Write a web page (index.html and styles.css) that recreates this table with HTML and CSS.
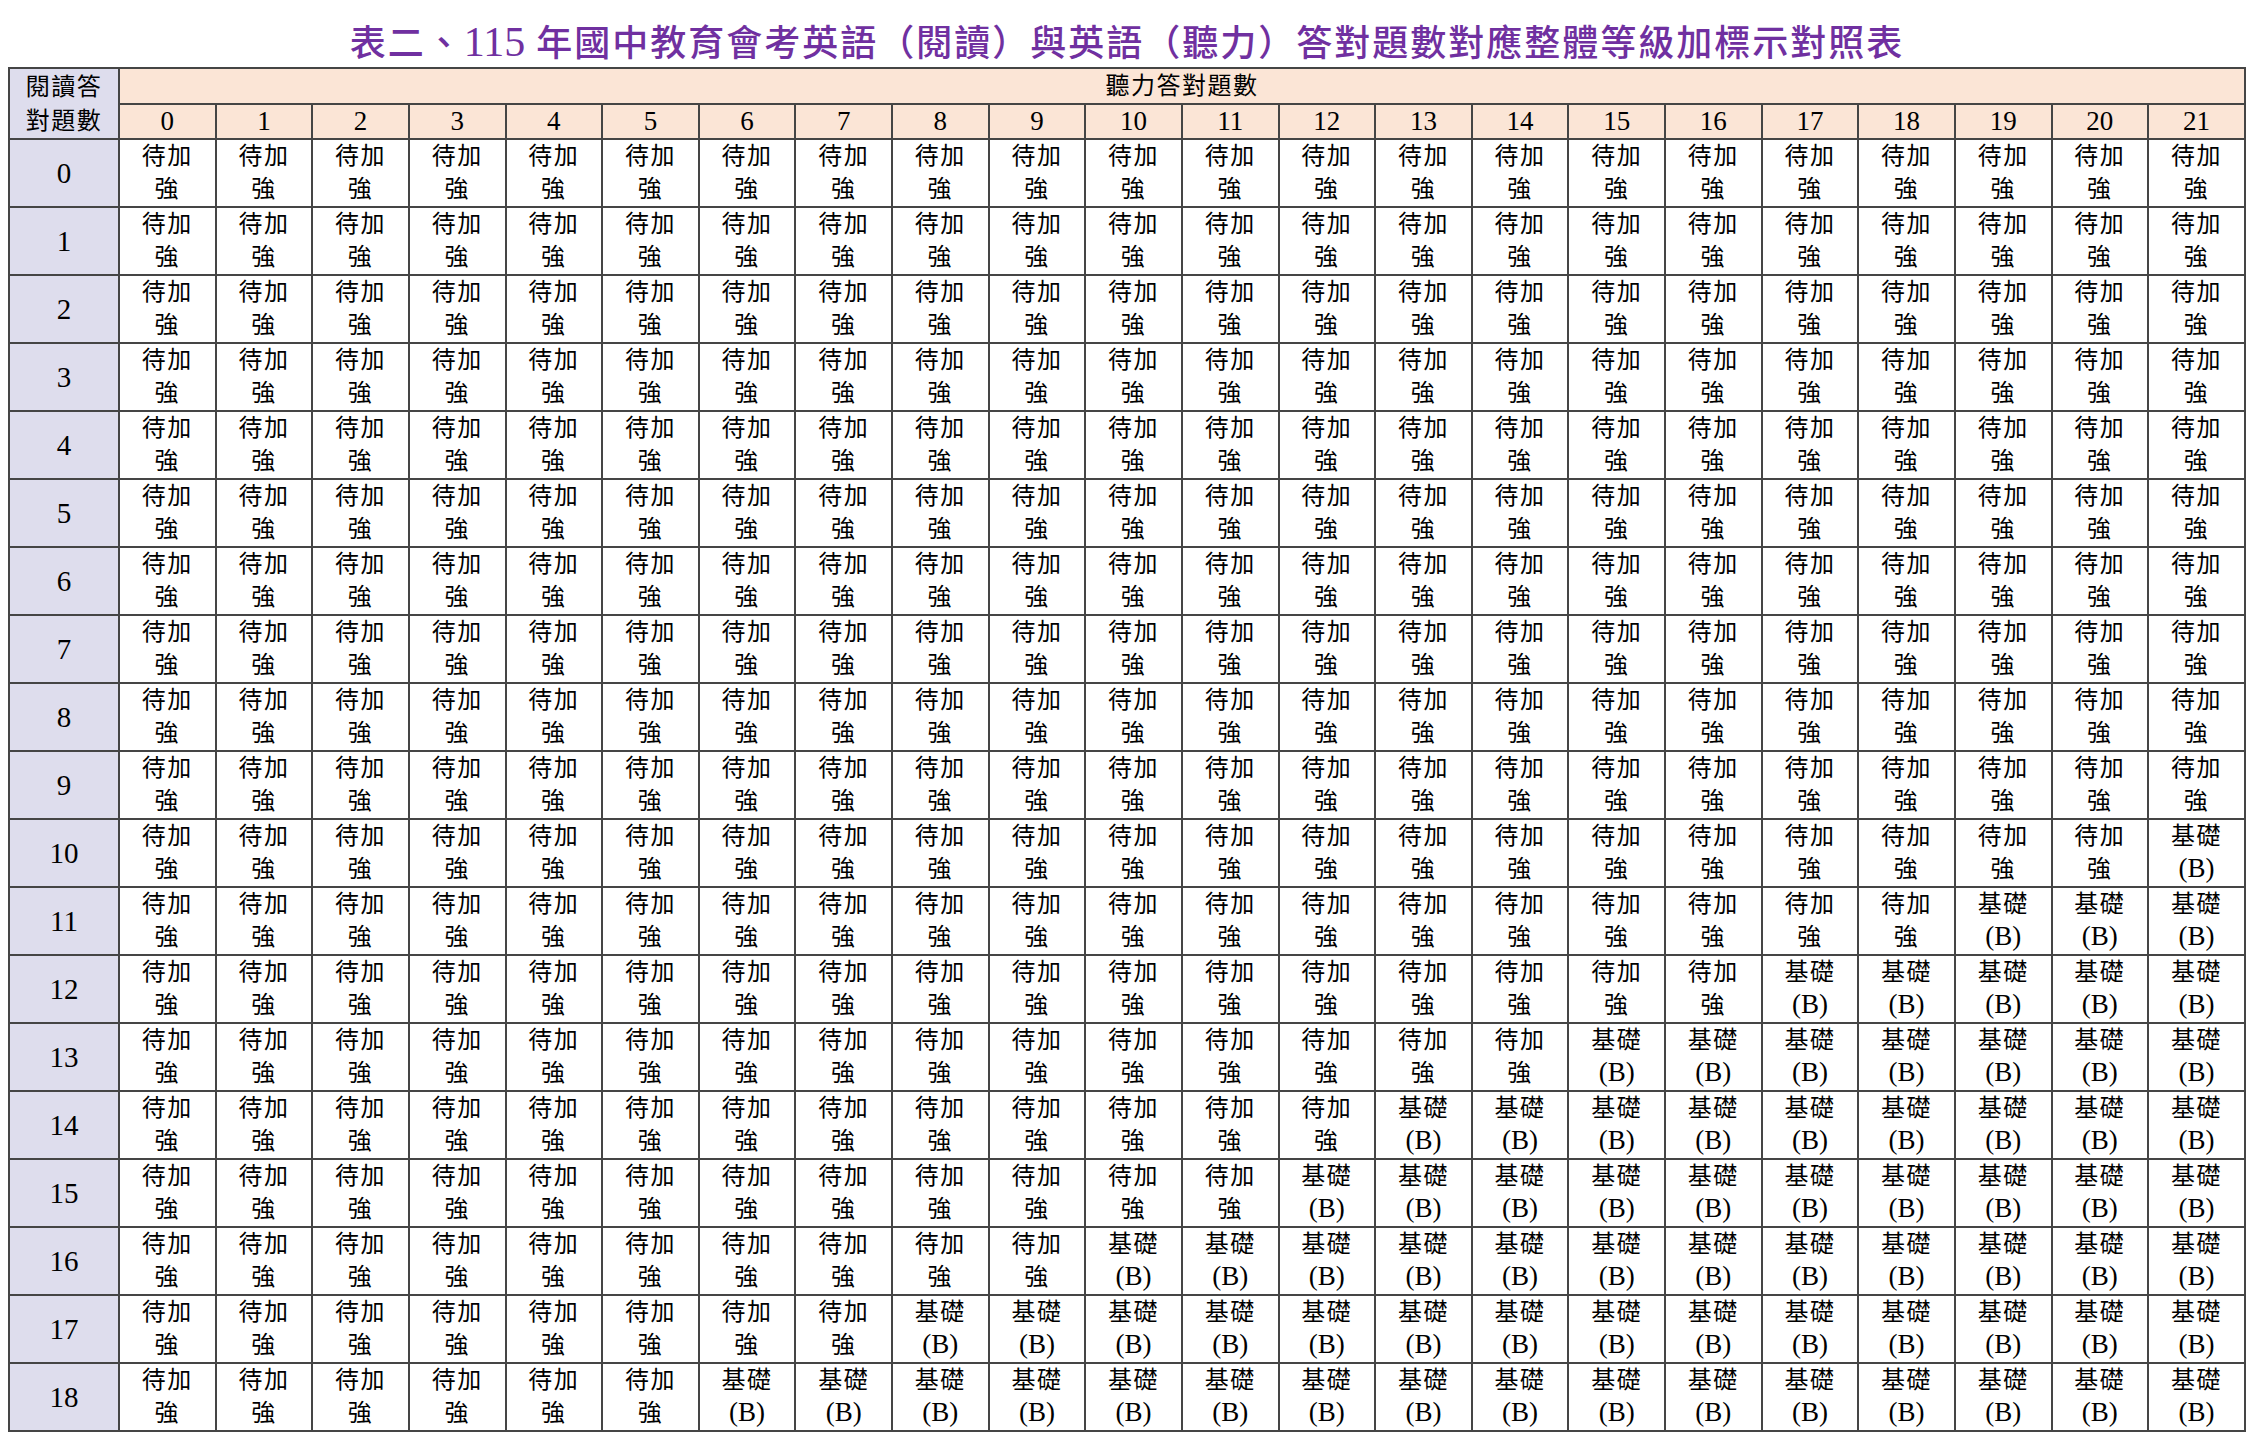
FILE: index.html
```html
<!DOCTYPE html>
<html lang="zh-Hant">
<head>
<meta charset="utf-8">
<title>表二、115 年國中教育會考英語（閱讀）與英語（聽力）答對題數對應整體等級加標示對照表</title>
<link rel="stylesheet" href="styles.css">
</head>
<body>
<h1 class="title">表二、<span class="num">115</span> 年國中教育會考英語（閱讀）與英語（聽力）答對題數對應整體等級加標示對照表</h1>
<table class="grid">
<colgroup><col class="c-lab"><col span="22"></colgroup>
<thead>
<tr class="h1"><th class="corner" rowspan="2">閱讀答<br>對題數</th><th class="listen" colspan="22">聽力答對題數</th></tr>
<tr class="h2"><th>0</th><th>1</th><th>2</th><th>3</th><th>4</th><th>5</th><th>6</th><th>7</th><th>8</th><th>9</th><th>10</th><th>11</th><th>12</th><th>13</th><th>14</th><th>15</th><th>16</th><th>17</th><th>18</th><th>19</th><th>20</th><th>21</th></tr>
</thead>
<tbody>
<tr><th class="lab">0</th><td>待加<br>強</td><td>待加<br>強</td><td>待加<br>強</td><td>待加<br>強</td><td>待加<br>強</td><td>待加<br>強</td><td>待加<br>強</td><td>待加<br>強</td><td>待加<br>強</td><td>待加<br>強</td><td>待加<br>強</td><td>待加<br>強</td><td>待加<br>強</td><td>待加<br>強</td><td>待加<br>強</td><td>待加<br>強</td><td>待加<br>強</td><td>待加<br>強</td><td>待加<br>強</td><td>待加<br>強</td><td>待加<br>強</td><td>待加<br>強</td></tr>
<tr><th class="lab">1</th><td>待加<br>強</td><td>待加<br>強</td><td>待加<br>強</td><td>待加<br>強</td><td>待加<br>強</td><td>待加<br>強</td><td>待加<br>強</td><td>待加<br>強</td><td>待加<br>強</td><td>待加<br>強</td><td>待加<br>強</td><td>待加<br>強</td><td>待加<br>強</td><td>待加<br>強</td><td>待加<br>強</td><td>待加<br>強</td><td>待加<br>強</td><td>待加<br>強</td><td>待加<br>強</td><td>待加<br>強</td><td>待加<br>強</td><td>待加<br>強</td></tr>
<tr><th class="lab">2</th><td>待加<br>強</td><td>待加<br>強</td><td>待加<br>強</td><td>待加<br>強</td><td>待加<br>強</td><td>待加<br>強</td><td>待加<br>強</td><td>待加<br>強</td><td>待加<br>強</td><td>待加<br>強</td><td>待加<br>強</td><td>待加<br>強</td><td>待加<br>強</td><td>待加<br>強</td><td>待加<br>強</td><td>待加<br>強</td><td>待加<br>強</td><td>待加<br>強</td><td>待加<br>強</td><td>待加<br>強</td><td>待加<br>強</td><td>待加<br>強</td></tr>
<tr><th class="lab">3</th><td>待加<br>強</td><td>待加<br>強</td><td>待加<br>強</td><td>待加<br>強</td><td>待加<br>強</td><td>待加<br>強</td><td>待加<br>強</td><td>待加<br>強</td><td>待加<br>強</td><td>待加<br>強</td><td>待加<br>強</td><td>待加<br>強</td><td>待加<br>強</td><td>待加<br>強</td><td>待加<br>強</td><td>待加<br>強</td><td>待加<br>強</td><td>待加<br>強</td><td>待加<br>強</td><td>待加<br>強</td><td>待加<br>強</td><td>待加<br>強</td></tr>
<tr><th class="lab">4</th><td>待加<br>強</td><td>待加<br>強</td><td>待加<br>強</td><td>待加<br>強</td><td>待加<br>強</td><td>待加<br>強</td><td>待加<br>強</td><td>待加<br>強</td><td>待加<br>強</td><td>待加<br>強</td><td>待加<br>強</td><td>待加<br>強</td><td>待加<br>強</td><td>待加<br>強</td><td>待加<br>強</td><td>待加<br>強</td><td>待加<br>強</td><td>待加<br>強</td><td>待加<br>強</td><td>待加<br>強</td><td>待加<br>強</td><td>待加<br>強</td></tr>
<tr><th class="lab">5</th><td>待加<br>強</td><td>待加<br>強</td><td>待加<br>強</td><td>待加<br>強</td><td>待加<br>強</td><td>待加<br>強</td><td>待加<br>強</td><td>待加<br>強</td><td>待加<br>強</td><td>待加<br>強</td><td>待加<br>強</td><td>待加<br>強</td><td>待加<br>強</td><td>待加<br>強</td><td>待加<br>強</td><td>待加<br>強</td><td>待加<br>強</td><td>待加<br>強</td><td>待加<br>強</td><td>待加<br>強</td><td>待加<br>強</td><td>待加<br>強</td></tr>
<tr><th class="lab">6</th><td>待加<br>強</td><td>待加<br>強</td><td>待加<br>強</td><td>待加<br>強</td><td>待加<br>強</td><td>待加<br>強</td><td>待加<br>強</td><td>待加<br>強</td><td>待加<br>強</td><td>待加<br>強</td><td>待加<br>強</td><td>待加<br>強</td><td>待加<br>強</td><td>待加<br>強</td><td>待加<br>強</td><td>待加<br>強</td><td>待加<br>強</td><td>待加<br>強</td><td>待加<br>強</td><td>待加<br>強</td><td>待加<br>強</td><td>待加<br>強</td></tr>
<tr><th class="lab">7</th><td>待加<br>強</td><td>待加<br>強</td><td>待加<br>強</td><td>待加<br>強</td><td>待加<br>強</td><td>待加<br>強</td><td>待加<br>強</td><td>待加<br>強</td><td>待加<br>強</td><td>待加<br>強</td><td>待加<br>強</td><td>待加<br>強</td><td>待加<br>強</td><td>待加<br>強</td><td>待加<br>強</td><td>待加<br>強</td><td>待加<br>強</td><td>待加<br>強</td><td>待加<br>強</td><td>待加<br>強</td><td>待加<br>強</td><td>待加<br>強</td></tr>
<tr><th class="lab">8</th><td>待加<br>強</td><td>待加<br>強</td><td>待加<br>強</td><td>待加<br>強</td><td>待加<br>強</td><td>待加<br>強</td><td>待加<br>強</td><td>待加<br>強</td><td>待加<br>強</td><td>待加<br>強</td><td>待加<br>強</td><td>待加<br>強</td><td>待加<br>強</td><td>待加<br>強</td><td>待加<br>強</td><td>待加<br>強</td><td>待加<br>強</td><td>待加<br>強</td><td>待加<br>強</td><td>待加<br>強</td><td>待加<br>強</td><td>待加<br>強</td></tr>
<tr><th class="lab">9</th><td>待加<br>強</td><td>待加<br>強</td><td>待加<br>強</td><td>待加<br>強</td><td>待加<br>強</td><td>待加<br>強</td><td>待加<br>強</td><td>待加<br>強</td><td>待加<br>強</td><td>待加<br>強</td><td>待加<br>強</td><td>待加<br>強</td><td>待加<br>強</td><td>待加<br>強</td><td>待加<br>強</td><td>待加<br>強</td><td>待加<br>強</td><td>待加<br>強</td><td>待加<br>強</td><td>待加<br>強</td><td>待加<br>強</td><td>待加<br>強</td></tr>
<tr><th class="lab">10</th><td>待加<br>強</td><td>待加<br>強</td><td>待加<br>強</td><td>待加<br>強</td><td>待加<br>強</td><td>待加<br>強</td><td>待加<br>強</td><td>待加<br>強</td><td>待加<br>強</td><td>待加<br>強</td><td>待加<br>強</td><td>待加<br>強</td><td>待加<br>強</td><td>待加<br>強</td><td>待加<br>強</td><td>待加<br>強</td><td>待加<br>強</td><td>待加<br>強</td><td>待加<br>強</td><td>待加<br>強</td><td>待加<br>強</td><td>基礎<br><span class="g">(B)</span></td></tr>
<tr><th class="lab">11</th><td>待加<br>強</td><td>待加<br>強</td><td>待加<br>強</td><td>待加<br>強</td><td>待加<br>強</td><td>待加<br>強</td><td>待加<br>強</td><td>待加<br>強</td><td>待加<br>強</td><td>待加<br>強</td><td>待加<br>強</td><td>待加<br>強</td><td>待加<br>強</td><td>待加<br>強</td><td>待加<br>強</td><td>待加<br>強</td><td>待加<br>強</td><td>待加<br>強</td><td>待加<br>強</td><td>基礎<br><span class="g">(B)</span></td><td>基礎<br><span class="g">(B)</span></td><td>基礎<br><span class="g">(B)</span></td></tr>
<tr><th class="lab">12</th><td>待加<br>強</td><td>待加<br>強</td><td>待加<br>強</td><td>待加<br>強</td><td>待加<br>強</td><td>待加<br>強</td><td>待加<br>強</td><td>待加<br>強</td><td>待加<br>強</td><td>待加<br>強</td><td>待加<br>強</td><td>待加<br>強</td><td>待加<br>強</td><td>待加<br>強</td><td>待加<br>強</td><td>待加<br>強</td><td>待加<br>強</td><td>基礎<br><span class="g">(B)</span></td><td>基礎<br><span class="g">(B)</span></td><td>基礎<br><span class="g">(B)</span></td><td>基礎<br><span class="g">(B)</span></td><td>基礎<br><span class="g">(B)</span></td></tr>
<tr><th class="lab">13</th><td>待加<br>強</td><td>待加<br>強</td><td>待加<br>強</td><td>待加<br>強</td><td>待加<br>強</td><td>待加<br>強</td><td>待加<br>強</td><td>待加<br>強</td><td>待加<br>強</td><td>待加<br>強</td><td>待加<br>強</td><td>待加<br>強</td><td>待加<br>強</td><td>待加<br>強</td><td>待加<br>強</td><td>基礎<br><span class="g">(B)</span></td><td>基礎<br><span class="g">(B)</span></td><td>基礎<br><span class="g">(B)</span></td><td>基礎<br><span class="g">(B)</span></td><td>基礎<br><span class="g">(B)</span></td><td>基礎<br><span class="g">(B)</span></td><td>基礎<br><span class="g">(B)</span></td></tr>
<tr><th class="lab">14</th><td>待加<br>強</td><td>待加<br>強</td><td>待加<br>強</td><td>待加<br>強</td><td>待加<br>強</td><td>待加<br>強</td><td>待加<br>強</td><td>待加<br>強</td><td>待加<br>強</td><td>待加<br>強</td><td>待加<br>強</td><td>待加<br>強</td><td>待加<br>強</td><td>基礎<br><span class="g">(B)</span></td><td>基礎<br><span class="g">(B)</span></td><td>基礎<br><span class="g">(B)</span></td><td>基礎<br><span class="g">(B)</span></td><td>基礎<br><span class="g">(B)</span></td><td>基礎<br><span class="g">(B)</span></td><td>基礎<br><span class="g">(B)</span></td><td>基礎<br><span class="g">(B)</span></td><td>基礎<br><span class="g">(B)</span></td></tr>
<tr><th class="lab">15</th><td>待加<br>強</td><td>待加<br>強</td><td>待加<br>強</td><td>待加<br>強</td><td>待加<br>強</td><td>待加<br>強</td><td>待加<br>強</td><td>待加<br>強</td><td>待加<br>強</td><td>待加<br>強</td><td>待加<br>強</td><td>待加<br>強</td><td>基礎<br><span class="g">(B)</span></td><td>基礎<br><span class="g">(B)</span></td><td>基礎<br><span class="g">(B)</span></td><td>基礎<br><span class="g">(B)</span></td><td>基礎<br><span class="g">(B)</span></td><td>基礎<br><span class="g">(B)</span></td><td>基礎<br><span class="g">(B)</span></td><td>基礎<br><span class="g">(B)</span></td><td>基礎<br><span class="g">(B)</span></td><td>基礎<br><span class="g">(B)</span></td></tr>
<tr><th class="lab">16</th><td>待加<br>強</td><td>待加<br>強</td><td>待加<br>強</td><td>待加<br>強</td><td>待加<br>強</td><td>待加<br>強</td><td>待加<br>強</td><td>待加<br>強</td><td>待加<br>強</td><td>待加<br>強</td><td>基礎<br><span class="g">(B)</span></td><td>基礎<br><span class="g">(B)</span></td><td>基礎<br><span class="g">(B)</span></td><td>基礎<br><span class="g">(B)</span></td><td>基礎<br><span class="g">(B)</span></td><td>基礎<br><span class="g">(B)</span></td><td>基礎<br><span class="g">(B)</span></td><td>基礎<br><span class="g">(B)</span></td><td>基礎<br><span class="g">(B)</span></td><td>基礎<br><span class="g">(B)</span></td><td>基礎<br><span class="g">(B)</span></td><td>基礎<br><span class="g">(B)</span></td></tr>
<tr><th class="lab">17</th><td>待加<br>強</td><td>待加<br>強</td><td>待加<br>強</td><td>待加<br>強</td><td>待加<br>強</td><td>待加<br>強</td><td>待加<br>強</td><td>待加<br>強</td><td>基礎<br><span class="g">(B)</span></td><td>基礎<br><span class="g">(B)</span></td><td>基礎<br><span class="g">(B)</span></td><td>基礎<br><span class="g">(B)</span></td><td>基礎<br><span class="g">(B)</span></td><td>基礎<br><span class="g">(B)</span></td><td>基礎<br><span class="g">(B)</span></td><td>基礎<br><span class="g">(B)</span></td><td>基礎<br><span class="g">(B)</span></td><td>基礎<br><span class="g">(B)</span></td><td>基礎<br><span class="g">(B)</span></td><td>基礎<br><span class="g">(B)</span></td><td>基礎<br><span class="g">(B)</span></td><td>基礎<br><span class="g">(B)</span></td></tr>
<tr><th class="lab">18</th><td>待加<br>強</td><td>待加<br>強</td><td>待加<br>強</td><td>待加<br>強</td><td>待加<br>強</td><td>待加<br>強</td><td>基礎<br><span class="g">(B)</span></td><td>基礎<br><span class="g">(B)</span></td><td>基礎<br><span class="g">(B)</span></td><td>基礎<br><span class="g">(B)</span></td><td>基礎<br><span class="g">(B)</span></td><td>基礎<br><span class="g">(B)</span></td><td>基礎<br><span class="g">(B)</span></td><td>基礎<br><span class="g">(B)</span></td><td>基礎<br><span class="g">(B)</span></td><td>基礎<br><span class="g">(B)</span></td><td>基礎<br><span class="g">(B)</span></td><td>基礎<br><span class="g">(B)</span></td><td>基礎<br><span class="g">(B)</span></td><td>基礎<br><span class="g">(B)</span></td><td>基礎<br><span class="g">(B)</span></td><td>基礎<br><span class="g">(B)</span></td></tr>
</tbody>
</table>
</body>
</html>
```
FILE: styles.css
```css
html, body {
  background: #ffffff;
}

body {
  margin: 8px;
  color: #000000;
  font-family: "Liberation Serif", "Noto Sans CJK TC", serif;
}

.title {
  margin: 0;
  padding-top: 13px;
  height: 46px;
  line-height: 46px;
  text-align: center;
  font-family: "Liberation Serif", "Noto Sans CJK TC", serif;
  font-size: 36px;
  font-weight: 500;
  letter-spacing: 2px;
  color: #7030a0;
  white-space: nowrap;
}

.title .num {
  font-size: 42px;
  line-height: 1;
  font-weight: normal;
  letter-spacing: 0;
}

.grid {
  width: 100%;
  border-collapse: collapse;
  table-layout: fixed;
}

.c-lab {
  width: 110px;
}

.grid th,
.grid td {
  border: 2px solid #454545;
  padding: 0;
  text-align: center;
  vertical-align: middle;
  font-weight: normal;
  font-size: 24px;
  letter-spacing: 1.5px;
  line-height: 33px;
  background: #ffffff;
}

.grid .g {
  font-size: 27px;
  line-height: 1;
  letter-spacing: 0;
}

.grid .h1 {
  height: 36px;
}

.grid .h2 {
  height: 35px;
}

.grid tbody tr {
  height: 68px;
}

.grid .corner {
  background: #dedded;
  line-height: 34px;
}

.grid .listen,
.grid .h2 th {
  background: #fbe5d6;
}

.grid .h2 th {
  font-size: 27px;
  letter-spacing: 0;
}

.grid .lab {
  background: #dedded;
  font-size: 29px;
  letter-spacing: 0;
}
```
